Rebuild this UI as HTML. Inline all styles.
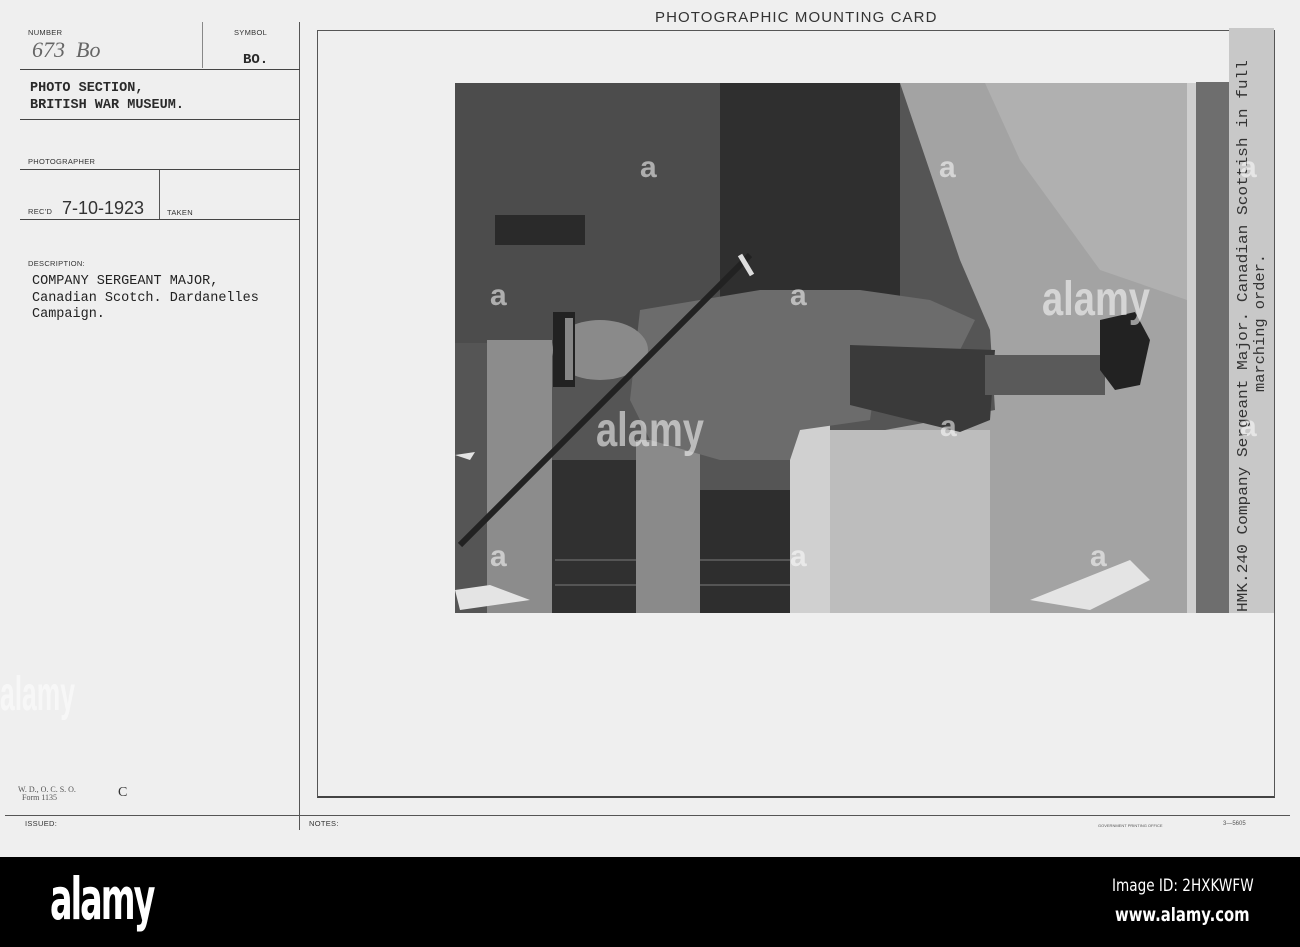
<!DOCTYPE html>
<html><head><meta charset="utf-8"><style>
*{margin:0;padding:0;box-sizing:border-box}
body{width:1300px;height:947px;background:#000;position:relative;overflow:hidden;font-family:"Liberation Sans",sans-serif}
.card{position:absolute;left:0;top:0;width:1300px;height:857px;background:#efefef}
.a{position:absolute;white-space:nowrap}
.lbl{font-size:7.5px;color:#333;letter-spacing:.3px}
.mono{font-family:"Liberation Mono",monospace;color:#2a2a2a;font-weight:bold}
.h{position:absolute;height:1px;background:#444}
.v{position:absolute;width:1px;background:#555}
</style></head><body>
<div class="card">
  <div class="a" style="left:655px;top:9px;font-size:15px;color:#333;letter-spacing:1.1px">PHOTOGRAPHIC MOUNTING CARD</div>
  <div class="v" style="left:299px;top:22px;height:808px"></div>
  <div class="v" style="left:202px;top:22px;height:46px;background:#888"></div>
  <div class="lbl a" style="left:28px;top:28px">NUMBER</div>
  <div class="lbl a" style="left:234px;top:28px">SYMBOL</div>
  <div class="a" style="left:32px;top:37px;font-size:22px;color:#666;font-style:italic;font-family:'Liberation Serif',serif">673 &nbsp;Bo</div>
  <div class="mono a" style="left:243px;top:52px;font-size:14px">BO.</div>
  <div class="h" style="left:20px;top:69px;width:280px"></div>
  <div class="mono a" style="left:30px;top:80px;font-size:13.5px;line-height:17px">PHOTO SECTION,<br>BRITISH WAR MUSEUM.</div>
  <div class="h" style="left:20px;top:119px;width:280px"></div>
  <div class="lbl a" style="left:28px;top:157px">PHOTOGRAPHER</div>
  <div class="h" style="left:20px;top:169px;width:280px"></div>
  <div class="v" style="left:159px;top:170px;height:49px"></div>
  <div class="lbl a" style="left:28px;top:207px">REC'D</div>
  <div class="a" style="left:62px;top:198px;font-size:18px;color:#333">7-10-1923</div>
  <div class="lbl a" style="left:167px;top:208px">TAKEN</div>
  <div class="h" style="left:20px;top:219px;width:280px"></div>
  <div class="lbl a" style="left:28px;top:259px">DESCRIPTION:</div>
  <div class="mono a" style="left:32px;top:274px;font-size:13.5px;line-height:16.5px;font-weight:normal;color:#222">COMPANY SERGEANT MAJOR,<br>Canadian Scotch. Dardanelles<br>Campaign.</div>
  <div class="a" style="left:18px;top:786px;font-size:8px;color:#555;font-family:'Liberation Serif',serif;line-height:8px">W. D., O. C. S. O.<br>&nbsp;&nbsp;Form 1135</div>
  <div class="a" style="left:118px;top:785px;font-size:14px;color:#333;font-family:'Liberation Serif',serif">C</div>
  <div class="h" style="left:5px;top:815px;width:1285px;background:#555"></div>
  <div class="lbl a" style="left:25px;top:819px">ISSUED:</div>
  <div class="lbl a" style="left:309px;top:819px">NOTES:</div>
  <div class="a" style="left:1098px;top:823px;font-size:4px;color:#555">GOVERNMENT PRINTING OFFICE</div>
  <div class="a" style="left:1223px;top:821px;font-size:6px;color:#555">3—5605</div>
  <div class="a" style="left:317px;top:30px;width:958px;height:768px;border:1px solid #555;border-bottom:2px solid #444"></div>
  <svg class="a" style="left:0;top:0" width="1300" height="857">
    <rect x="455" y="83" width="742" height="530" fill="#555"/>
    <rect x="455" y="83" width="270" height="260" fill="#4c4c4c"/>
    <rect x="720" y="83" width="180" height="230" fill="#2f2f2f"/>
    <rect x="495" y="215" width="90" height="30" fill="#2a2a2a"/>
    <polygon points="900,83 1187,83 1187,613 830,613 830,440 995,410 990,330 960,260" fill="#a3a3a3"/>
    <polygon points="985,83 1187,83 1187,300 1100,270 1020,160" fill="#b0b0b0"/>
    <rect x="830" y="430" width="160" height="183" fill="#bdbdbd"/>
    <rect x="790" y="420" width="40" height="193" fill="#d0d0d0"/>
    <rect x="487" y="340" width="65" height="273" fill="#8c8c8c"/>
    <rect x="552" y="460" width="84" height="153" fill="#303030"/>
    <rect x="636" y="440" width="64" height="173" fill="#8a8a8a"/>
    <rect x="700" y="490" width="90" height="123" fill="#2e2e2e"/>
    <g stroke="#555" stroke-width="2"><line x1="555" y1="560" x2="636" y2="560"/><line x1="555" y1="585" x2="636" y2="585"/><line x1="700" y1="560" x2="790" y2="560"/><line x1="700" y1="585" x2="790" y2="585"/></g>
    <polygon points="640,310 760,290 860,290 930,300 975,320 960,350 880,350 870,420 800,430 790,460 720,460 650,440 630,400" fill="#6c6c6c"/>
    <polygon points="850,345 995,350 990,420 960,432 850,405" fill="#3a3a3a"/>
    <rect x="985" y="355" width="120" height="40" fill="#5a5a5a"/>
    <polygon points="1100,320 1135,312 1150,340 1140,385 1115,390 1100,370" fill="#222"/>
    <ellipse cx="600" cy="350" rx="48" ry="30" fill="#8a8a8a"/>
    <rect x="553" y="312" width="22" height="75" fill="#222"/>
    <rect x="565" y="318" width="8" height="62" fill="#ccc" opacity=".6"/>
    <line x1="460" y1="545" x2="750" y2="255" stroke="#222" stroke-width="6"/>
    <line x1="740" y1="255" x2="752" y2="275" stroke="#ddd" stroke-width="5"/>
    <g fill="#e4e4e4"><polygon points="455,590 490,585 530,600 460,610"/><polygon points="455,455 475,452 470,460"/><polygon points="1030,600 1130,560 1150,580 1090,610"/></g>
    <rect x="1187" y="83" width="10" height="530" fill="#cfcfcf"/>
    <rect x="1196" y="82" width="34" height="531" fill="#6e6e6e"/>
    <rect x="1229" y="28" width="45" height="585" fill="#c8c8c8"/>
    <text transform="translate(1247,612) rotate(-90)" font-family="Liberation Mono,monospace" font-size="15" fill="#333" textLength="552" lengthAdjust="spacingAndGlyphs">HMK.240  Company Sergeant Major. Canadian Scottish in full</text>
    <text transform="translate(1264,392) rotate(-90)" font-family="Liberation Mono,monospace" font-size="15" fill="#333" textLength="138" lengthAdjust="spacingAndGlyphs">marching order.</text>
    <g font-family="Liberation Sans,sans-serif" font-weight="bold" fill="#fff" opacity=".55">
      <text x="1042" y="315" font-size="48" textLength="108" lengthAdjust="spacingAndGlyphs">alamy</text>
      <text x="596" y="446" font-size="48" textLength="108" lengthAdjust="spacingAndGlyphs">alamy</text>
      <g font-size="30"><text x="640" y="177">a</text><text x="939" y="177">a</text><text x="1240" y="177">a</text><text x="490" y="305">a</text><text x="790" y="305">a</text><text x="940" y="436">a</text><text x="1240" y="436">a</text><text x="490" y="566">a</text><text x="790" y="566">a</text><text x="1090" y="566">a</text></g>
    </g>
    <text x="0" y="710" font-family="Liberation Sans,sans-serif" font-weight="bold" font-size="48" fill="#fff" opacity=".55" textLength="75" lengthAdjust="spacingAndGlyphs">alamy</text>
  </svg>
</div>
<div class="a" style="left:50px;top:865px;font-size:58px;font-weight:bold;color:#fff;letter-spacing:-3px;transform:scaleX(.64);transform-origin:left;font-family:'DejaVu Sans Condensed','Liberation Sans',sans-serif">alamy</div>
<div class="a" style="left:1112px;top:876px;font-size:17px;color:#fff;transform:scaleX(.8);transform-origin:left;font-family:'DejaVu Sans',sans-serif">Image ID: 2HXKWFW</div>
<div class="a" style="left:1115px;top:904px;font-size:19px;font-weight:bold;color:#fff;transform:scaleX(.78);transform-origin:left;font-family:'DejaVu Sans',sans-serif">www.alamy.com</div>
</body></html>
